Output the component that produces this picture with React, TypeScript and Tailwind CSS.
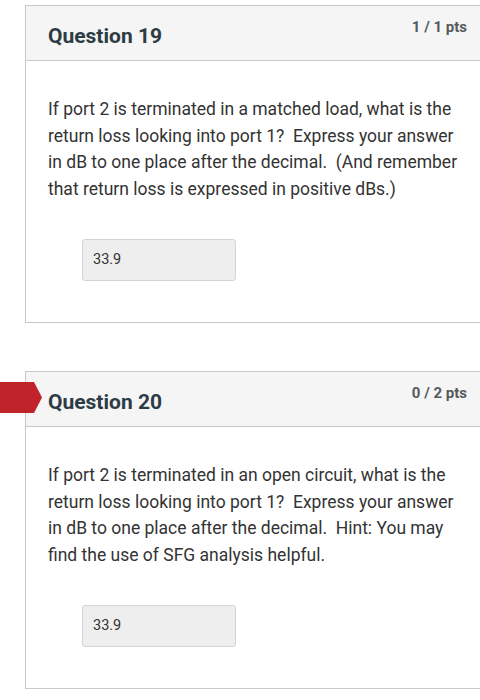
import React from "react";

type Q = {
  title: string;
  pts: string;
  lines: string[];
  answer: string;
  flagged?: boolean;
};

const questions: Q[] = [
  {
    title: "Question 19",
    pts: "1 / 1 pts",
    lines: [
      "If port 2 is terminated in a matched load, what is the",
      "return loss looking into port 1?  Express your answer",
      "in dB to one place after the decimal.  (And remember",
      "that return loss is expressed in positive dBs.)",
    ],
    answer: "33.9",
  },
  {
    title: "Question 20",
    pts: "0 / 2 pts",
    lines: [
      "If port 2 is terminated in an open circuit, what is the",
      "return loss looking into port 1?  Express your answer",
      "in dB to one place after the decimal.  Hint: You may",
      "find the use of SFG analysis helpful.",
    ],
    answer: "33.9",
    flagged: true,
  },
];

function QuestionCard({ q }: { q: Q }) {
  return (
    <div className="relative ml-[25px] mr-[-4px] border border-[#c8c8c8] bg-white">
      {q.flagged && (
        <svg
          className="absolute left-[-26px] top-[10px]"
          width="43"
          height="31"
          viewBox="0 0 43 31"
        >
          <polygon points="0,0 34,0 42,15.5 34,31 0,31" fill="#c0232a" />
        </svg>
      )}
      <div className="flex h-[55px] justify-between border-b border-[#c8c8c8] bg-[#f5f5f5] pl-[22px] pr-[16px]">
        <h2 className="pt-[18px] text-[21px] font-bold leading-[24px] text-[#2d3b45]">
          {q.title}
        </h2>
        <span className="pt-[11px] text-[15px] font-bold leading-[20px] text-[#555a5e]">
          {q.pts}
        </span>
      </div>
      <div className="px-[22px] pb-[41px] pt-[35px]">
        <p className="whitespace-pre text-[17.5px] leading-[26.5px] text-[#333]">
          {q.lines.join("\n")}
        </p>
        <div className="ml-[34px] mt-[37px] flex h-[42px] w-[154px] items-center rounded-[3px] border border-[#d4d4d4] bg-[#eeeeee] pl-[10px] text-[14.5px] text-[#333]">
          {q.answer}
        </div>
      </div>
    </div>
  );
}

export default function App() {
  return (
    <div
      className="h-[700px] w-[480px] overflow-hidden bg-white pt-[5px]"
      style={{ fontFamily: "Roboto, 'Liberation Sans', sans-serif" }}
    >
      <div className="flex flex-col gap-[48px]">
        {questions.map((q) => (
          <QuestionCard key={q.title} q={q} />
        ))}
      </div>
    </div>
  );
}
